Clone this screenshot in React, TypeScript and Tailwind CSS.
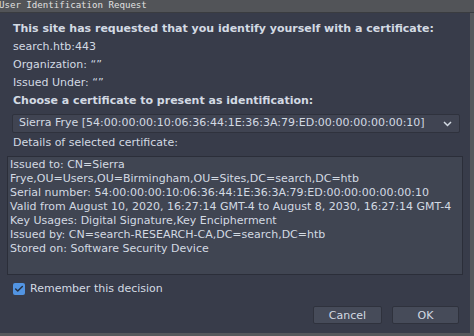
import { Check } from "lucide-react";

const detailLines = [
  "Issued to: CN=Sierra Frye,OU=Users,OU=Birmingham,OU=Sites,DC=search,DC=htb",
  "Serial number: 54:00:00:00:10:06:36:44:1E:36:3A:79:ED:00:00:00:00:00:10",
  "Valid from August 10, 2020, 16:27:14 GMT-4 to August 8, 2030, 16:27:14 GMT-4",
  "Key Usages: Digital Signature,Key Encipherment",
  "Issued by: CN=search-RESEARCH-CA,DC=search,DC=htb",
  "Stored on: Software Security Device",
];

export default function App() {
  return (
    <div className="flex h-[336px] w-[474px] flex-col overflow-hidden bg-[#56585c] font-['DejaVu_Sans',sans-serif] text-[11px] text-[#d3dae3]">
      {/* Title bar */}
      <div className="flex h-[13px] items-center border-b border-[#3a3c40] bg-[#525458] font-['DejaVu_Sans_Mono',monospace] text-[9.1px] leading-none text-[#e0e0e0]">
        <span className="-ml-[1px]">User Identification Request</span>
      </div>

      <div className="flex flex-1">
        <div className="flex w-[470px] flex-col bg-[#383c4a]">
          {/* Request info */}
          <div className="pl-[13px] pt-[7px] leading-[18px]">
            <div className="font-bold">This site has requested that you identify yourself with a certificate:</div>
            <div>search.htb:443</div>
            <div>Organization: “”</div>
            <div>Issued Under: “”</div>
            <div className="font-bold">Choose a certificate to present as identification:</div>
          </div>

          {/* Certificate select */}
          <div className="ml-[12px] mt-[4px] flex h-[19px] w-[448px] items-center justify-between rounded-[2px] border border-[#2f323d] bg-[#404452] pl-[6px] pr-[6px]">
            <span>Sierra Frye [54:00:00:00:10:06:36:44:1E:36:3A:79:ED:00:00:00:00:00:10]</span>
            <svg width="9" height="6" viewBox="0 0 9 6" className="mr-[1px]">
              <polyline points="1,1 4.5,4.5 8,1" fill="none" stroke="#d3dae3" strokeWidth="1.5" />
            </svg>
          </div>

          <div className="mt-[1px] pl-[13px] leading-[18px]">Details of selected certificate:</div>

          {/* Details box */}
          <div className="ml-[7px] mt-[4px] h-[119px] w-[456px] border border-[#2b2e39] bg-[#404552] pl-[2px] pt-[1px] leading-[14px]">
            {detailLines.map((line) => (
              <div key={line} className="whitespace-pre-wrap">
                {line}
              </div>
            ))}
          </div>

          {/* Remember checkbox */}
          <div className="ml-[13px] mt-[8px] flex h-[12px] items-center gap-[5px]">
            <span className="flex h-[12px] w-[12px] items-center justify-center rounded-[2px] bg-[#5294e2]">
              <Check size={10} strokeWidth={3.5} color="#243042" />
            </span>
            <span>Remember this decision</span>
          </div>

          {/* Buttons */}
          <div className="mr-[11px] mt-[11px] flex justify-end gap-[10px]">
            <button className="h-[18px] w-[69px] rounded-[2px] border border-[#2f323d] bg-[#464b59] text-[11px] leading-none text-[#d3dae3]">
              Cancel
            </button>
            <button className="h-[18px] w-[67px] rounded-[2px] border border-[#2f323d] bg-[#464b59] text-[11px] leading-none text-[#d3dae3]">
              OK
            </button>
          </div>
        </div>
        <div className="flex-1" />
      </div>
      <div className="h-[3px]" />
    </div>
  );
}
